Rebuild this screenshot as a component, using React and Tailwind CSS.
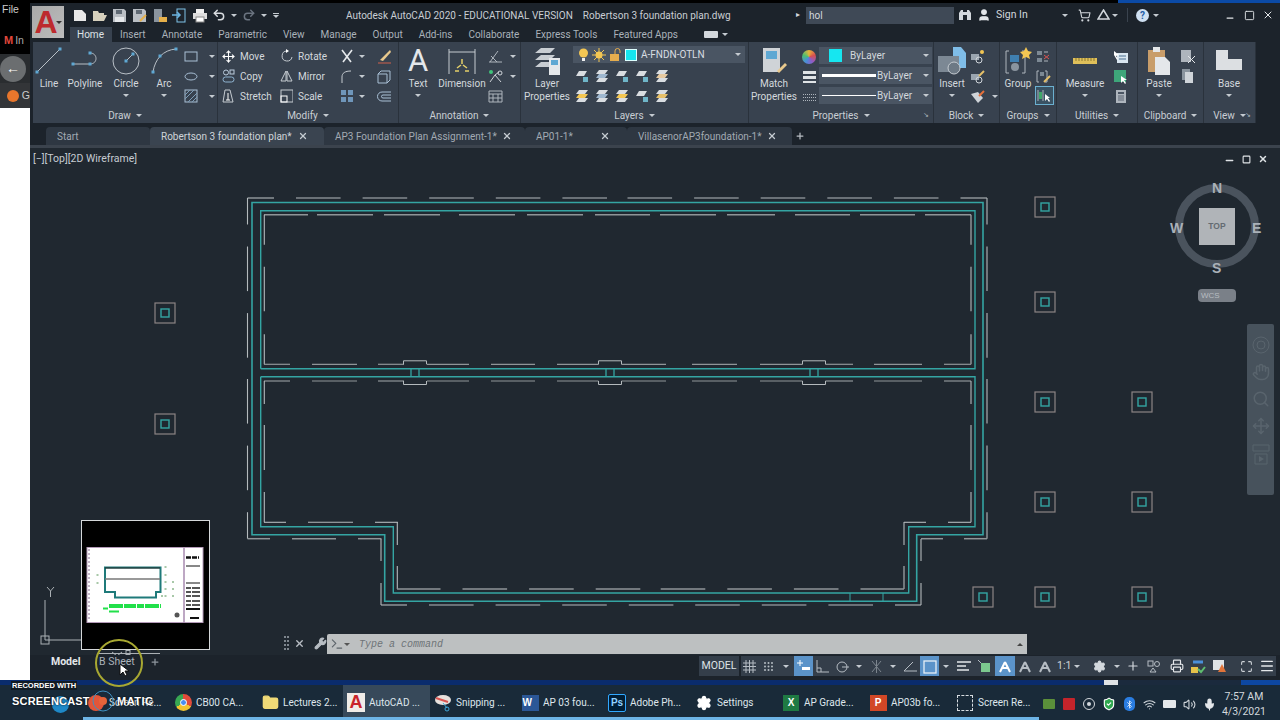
import React from "react";
import { Move, X, Plus, Wrench, ShoppingCart, User, Minus, Square, Settings, Mic, Volume2, Wifi, Bluetooth, ShieldCheck, Printer, Menu, Maximize, Terminal, Undo2, Redo2, Folder, Hand, Search } from "lucide-react";

const Caret = ({ c = "border-t-[#c5cbd1]" }) => (
  <span className={`inline-block w-0 h-0 border-x-[3px] border-x-transparent border-t-[3px] ${c}`} />
);
const S = ({ w = 16, h = 16, children, className = "" }) => (
  <svg width={w} height={h} viewBox={`0 0 ${w} ${h}`} className={`shrink-0 ${className}`} fill="none">{children}</svg>
);
const Node = ({ x, y }) => <rect x={x - 1.5} y={y - 1.5} width="3" height="3" fill="#5fa8d3" />;

const Big = ({ w, label, icon, caret, className = "" }) => (
  <div className={`flex flex-col items-center shrink-0 pt-[4px] ${className}`} style={{ width: w }}>
    <div className="h-[29px] flex items-center justify-center">{icon}</div>
    <div className="mt-[2px] text-center leading-[13px]">{label}</div>
    {caret && <div className="leading-[6px] mt-[1px]"><Caret /></div>}
  </div>
);
const Foot = ({ label, corner }) => (
  <div className="h-[16px] pt-[1px] flex items-center justify-center gap-[5px] relative text-[#c9ced4]">
    {label}<Caret />
    {corner && <span className="absolute right-[4px] text-[7px] text-[#aeb5bd]">↘</span>}
  </div>
);
const Panel = ({ w, label, corner, children }) => (
  <div className="bg-[#38424f] border-r border-[#2a323c] flex flex-col shrink-0" style={{ width: w }}>
    <div className="h-[65px] flex overflow-hidden">{children}</div>
    <Foot label={label} corner={corner} />
  </div>
);
const Row = ({ icon, text, caret, className = "" }) => (
  <div className={`h-[20px] flex items-center gap-[3px] ${className}`}>
    {icon}{text && <span>{text}</span>}{caret && <span className="ml-[4px] flex"><Caret /></span>}
  </div>
);
const Drop = ({ w, children }) => (
  <div className="h-[17px] bg-[#4a5563] flex items-center justify-between pr-[3px] mb-[3px]" style={{ width: w }}>
    <div className="flex items-center flex-1">{children}</div><Caret />
  </div>
);

const layerShape = (a = "#d9dde1") => (
  <S w={16} h={16}>
    <path d="M5 3h8l-3 5H2z" fill={a} />
    <path d="M9 9h5v5H9z" fill="#6fb6c9" />
  </S>
);
const stack = (b = "#9fb8d0") => (
  <S w={16} h={16}>
    <path d="M5 2h9l-3 4H2z" fill="#d9dde1" /><path d="M5 6h9l-3 4H2z" fill={b} /><path d="M5 10h9l-3 4H2z" fill="#d9dde1" />
  </S>
);

function Ribbon() {
  return (
    <div className="flex h-[81px] pl-[3px] text-[10px] text-[#d3d8dd]">
      <Panel w={185} label="Draw">
        <Big w={32} label="Line" icon={<S w={28} h={27}><path d="M2 25L25 2" stroke="#b9c0c7" /><Node x={2} y={25} /><Node x={25} y={2} /></S>} />
        <Big w={40} label="Polyline" icon={<S w={30} h={26}><path d="M3 16h17c8 0 8-11 0-11" stroke="#b9c0c7" /><Node x={3} y={16} /><Node x={20} y={16} /><Node x={20} y={5} /></S>} />
        <Big w={42} label="Circle" caret icon={<S w={29} h={28}><circle cx="14" cy="14" r="13" stroke="#b9c0c7" /><path d="M14 14l7-7" stroke="#b9c0c7" /><Node x={14} y={14} /><Node x={21} y={7} /></S>} />
        <Big w={34} label="Arc" caret icon={<S w={27} h={27}><path d="M2 25C4 12 12 3 25 2" stroke="#b9c0c7" /><Node x={2} y={25} /><Node x={9} y={9} /><Node x={25} y={2} /></S>} />
        <div className="pt-[4px] pl-[3px]">
          <Row caret icon={<S w={15} h={13} className="mr-[3px]"><rect x="1" y="2" width="12" height="9" stroke="#a9c0d6" /></S>} />
          <Row caret icon={<S w={15} h={13} className="mr-[3px]"><ellipse cx="7" cy="6.5" rx="6" ry="3.5" stroke="#a9c0d6" /></S>} />
          <Row caret icon={<S w={15} h={14} className="mr-[3px]"><rect x="1" y="1" width="12" height="12" stroke="#a9c0d6" /><path d="M1 10l9-9M4 13l9-9M1 6l5-5M8 13l5-5" stroke="#7d9db8" /></S>} />
        </div>
      </Panel>
      <Panel w={181} label="Modify">
        <div className="pt-[4px] pl-[4px] w-[61px]">
          <Row text="Move" className="gap-[5px]" icon={<Move size={13} className="text-white" />} />
          <Row text="Copy" className="gap-[5px]" icon={<S w={13} h={14}><circle cx="4" cy="3.5" r="2.5" stroke="#bcd" /><rect x="8" y="1" width="4" height="4" stroke="#bcd" /><rect x="1" y="8" width="11" height="5" rx="2.5" stroke="#8fb3d0" /></S>} />
          <Row text="Stretch" className="gap-[5px]" icon={<S w={13} h={14}><path d="M3 1h5l3 12H1z" stroke="#c5cbd1" /><path d="M6 4v7M4 11h4" stroke="#fff" /></S>} />
        </div>
        <div className="pt-[4px] pl-[1px] w-[61px]">
          <Row text="Rotate" className="gap-[5px]" icon={<S w={13} h={14}><path d="M7 2a5 5 0 1 0 5 6" stroke="#c5cbd1" /><path d="M6 0l3 2-3 2z" fill="#fff" /></S>} />
          <Row text="Mirror" className="gap-[5px]" icon={<S w={13} h={14}><path d="M6 2L1 12h5zM7 2l5 10H7z" stroke="#c5cbd1" /></S>} />
          <Row text="Scale" className="gap-[5px]" icon={<S w={13} h={14}><rect x="1" y="1" width="12" height="12" stroke="#c5cbd1" /><rect x="1" y="7" width="6" height="6" stroke="#fff" /></S>} />
        </div>
        <div className="pt-[4px]">
          <div className="flex h-[20px] items-center">
            <S w={14} h={15}><path d="M2 1l9 12M12 1L3 13" stroke="#e6e9ec" strokeWidth="1.6" /></S><span className="ml-[5px] mr-[12px] flex"><Caret /></span>
            <S w={15} h={15}><path d="M3 11L13 1l1 2-8 9z" fill="#e9c98d" /><path d="M1 14h13" stroke="#d0604c" /></S>
          </div>
          <div className="flex h-[20px] items-center">
            <S w={14} h={15}><path d="M2 14V8c0-4 3-6 9-6" stroke="#c5cbd1" /></S><span className="ml-[5px] mr-[12px] flex"><Caret /></span>
            <S w={15} h={15}><path d="M1 5h9v9H1zM1 5l3-3h9v9l-3 3" stroke="#a9c0d6" /></S>
          </div>
          <div className="flex h-[20px] items-center">
            <S w={14} h={14}><path d="M1 1h5v5H1zM8 1h5v5H8zM1 8h5v5H1zM8 8h5v5H8z" fill="#6f96ba" /></S><span className="ml-[5px] mr-[12px] flex"><Caret /></span>
            <S w={15} h={13}><path d="M14 2H5a4 4 0 0 0 0 9h9M14 5H6a1.500 1.500 0 0 0 0 3h8" stroke="#a9c0d6" /></S>
          </div>
        </div>
      </Panel>
      <Panel w={122} label="Annotation">
        <Big w={38} label="Text" caret icon={<span className="text-[31px] leading-[29px] text-[#e4e7ea]">A</span>} />
        <Big w={50} label="Dimension" icon={<S w={28} h={28}><path d="M1 2v25M27 2v25" stroke="#c5cbd1" /><path d="M1 5h26" stroke="#c5cbd1" /><path d="M9 21l4-3M19 21l-4-3M14 17v-5M7 24h4M17 24h4" stroke="#e3cf6a" strokeWidth="1.5" /></S>} />
        <div className="pt-[4px] pl-[1px]">
          <Row caret icon={<S w={15} h={15}><path d="M1 13h13M2 13l8-11" stroke="#aeb5bd" /><path d="M3 7l6 6" stroke="#aeb5bd" /></S>} />
          <Row caret icon={<S w={15} h={15}><path d="M2 13l5-7 6 7M7 6l4-3" stroke="#cfd4d9" /><circle cx="3" cy="3" r="2" fill="#3fc37a" /><circle cx="12" cy="4" r="2" stroke="#cfd4d9" /></S>} />
          <Row icon={<S w={15} h={13}><path d="M1 1h13v11H1zM1 4h13M1 8h13M5 4v8M10 4v8" stroke="#aeb5bd" /></S>} />
        </div>
      </Panel>
      <Panel w={228} label="Layers">
        <Big w={52} label={<>Layer<br />Properties</>} icon={<S w={30} h={30}><path d="M9 2h14l-5 5H3zM9 9h14l-5 5H3zM9 16h14l-5 5H3z" fill="#c9ced3" /><rect x="17" y="12" width="11" height="17" fill="#e4e7ea" /><rect x="19" y="14" width="7" height="5" fill="#5fa8d3" /></S>} />
        <div className="pt-[4px]">
          <div className="w-[172px] h-[17px] bg-[#4a5563] flex items-center pl-[5px] pr-[4px] gap-[3px] mb-[3px]">
            <S w={11} h={14}><circle cx="5.500" cy="5" r="4.500" fill="#f3c653" /><rect x="4" y="10" width="3" height="3" fill="#eee" /></S>
            <S w={14} h={14}><circle cx="7" cy="7" r="3.500" fill="#f3c653" /><path d="M7 0v14M0 7h14M2 2l10 10M12 2L2 12" stroke="#f3c653" /></S>
            <S w={13} h={13}><rect x="1" y="6" width="9" height="7" fill="#e6ad4e" /><path d="M6 6V3a2.500 2.500 0 0 1 5 0v2" stroke="#e6ad4e" /></S>
            <span className="w-[12px] h-[12px] bg-[#16e6f0] border border-[#dff]" />
            <span className="flex-1 ml-[1px] text-[#d8dde2]">A-FNDN-OTLN</span>
            <Caret />
          </div>
          <div className="flex gap-[4px] pl-[1px] h-[20px] items-center">{[layerShape(), stack(), layerShape(), layerShape(), stack("#e6c9a0")].map((x, i) => <span key={i}>{x}</span>)}</div>
          <div className="flex gap-[4px] pl-[1px] h-[20px] items-center">{[stack("#f3c653"), stack(), stack("#f3c653"), layerShape(), stack("#e6c06a")].map((x, i) => <span key={i}>{x}</span>)}</div>
        </div>
      </Panel>
      <Panel w={185} label="Properties" corner>
        <Big w={50} label={<>Match<br />Properties</>} icon={<S w={28} h={28}><rect x="3" y="1" width="17" height="24" fill="#cfd3d7" /><rect x="6" y="4" width="11" height="8" fill="#5fa8d3" /><path d="M17 24l8-8 2 2-8 8z" fill="#e9c98d" /></S>} />
        <div className="pt-[5px] flex">
          <div className="w-[20px] flex flex-col items-center">
            <div className="h-[20px] flex items-center"><span className="block w-[14px] h-[14px] rounded-full bg-[conic-gradient(#e8b23a,#d94f4f,#8d5cc7,#4a8fd9,#4fbf6f,#e8b23a)]" /></div>
            <div className="h-[20px] flex flex-col justify-center gap-[2px]"><span className="block w-[13px] h-[3px] bg-[#dfe3e6]" /><span className="block w-[13px] h-[3px] bg-[#dfe3e6]" /><span className="block w-[13px] h-[2px] bg-[#dfe3e6]" /></div>
            <div className="h-[20px] flex flex-col justify-center gap-[2px]"><span className="block w-[13px] h-[1px] border-t border-dotted border-[#aeb5bd]" /><span className="block w-[13px] h-[1px] border-t border-dotted border-[#aeb5bd]" /><span className="block w-[13px] h-[1px] border-t border-dotted border-[#aeb5bd]" /></div>
          </div>
          <div>
            <Drop w={113}><span className="w-[13px] h-[13px] bg-[#16e6f0] ml-[10px] mr-[8px]" />ByLayer</Drop>
            <Drop w={113}><span className="w-[54px] h-[3px] bg-white ml-[3px] mr-[1px]" />ByLayer</Drop>
            <Drop w={113}><span className="w-[54px] h-[1px] bg-white ml-[3px] mr-[1px]" />ByLayer</Drop>
          </div>
        </div>
      </Panel>
      <Panel w={66} label="Block">
        <Big w={36} label="Insert" caret icon={<S w={30} h={30}><path d="M16 1h8l5 6v15H16z" fill="#7fbde8" /><rect x="1" y="10" width="21" height="16" fill="#7c8894" /><circle cx="17" cy="22" r="6" fill="#6d7985" stroke="#c5cbd1" /></S>} />
        <div className="pt-[4px]">
          <Row icon={<S w={15} h={15}><rect x="1" y="5" width="8" height="6" fill="#9aa5b0" /><circle cx="9" cy="11" r="3" stroke="#cfd4d9" /><circle cx="12" cy="3" r="2" fill="#f3c653" /></S>} />
          <Row icon={<S w={15} h={15}><rect x="1" y="5" width="8" height="6" fill="#9aa5b0" /><circle cx="9" cy="11" r="3" stroke="#cfd4d9" /><path d="M9 7l5-5" stroke="#e6c06a" strokeWidth="2" /></S>} />
          <Row caret icon={<S w={15} h={15}><path d="M1 5l7-2 5 6-5 5z" fill="#cfd4d9" /><path d="M9 7l5-5" stroke="#e6703a" strokeWidth="2" /></S>} />
        </div>
      </Panel>
      <Panel w={57} label="Groups">
        <Big w={36} label="Group" icon={<S w={28} h={28}><path d="M5 4H2v22h3M18 4h3v22h-3" stroke="#aeb5bd" /><rect x="6" y="8" width="9" height="7" fill="#3f7fb0" /><circle cx="11" cy="20" r="4" fill="#8a949e" /><path d="M22 0l2 4 4 1-3 3 1 4-4-2-4 2 1-4-3-3 4-1z" fill="#f3c653" /></S>} />
        <div className="pt-[4px]">
          <Row icon={<S w={15} h={15}><rect x="1" y="2" width="5" height="4" fill="#7d8994" /><rect x="1" y="9" width="5" height="4" fill="#7d8994" /><path d="M8 3h4M8 12h4" stroke="#aeb5bd" /><path d="M8 6l5 4M13 6l-5 4" stroke="#d9534f" /></S>} />
          <Row icon={<S w={15} h={15}><path d="M3 2H1v11h2M9 2h2v11H9" stroke="#aeb5bd" /><rect x="4" y="3" width="4" height="4" fill="#7d8994" /><path d="M8 13l6-6" stroke="#e6c06a" strokeWidth="2" /></S>} />
          <div className="w-[19px] h-[19px] border border-[#6bb0d0] bg-[#3a5263] -ml-[1px] flex items-center justify-center"><S w={15} h={15}><path d="M1 2v11M6 2v11" stroke="#aeb5bd" /><rect x="2" y="4" width="3" height="7" fill="#3fa76a" /><path d="M8 6v7l2-2 2 3 1-1-2-3h2z" fill="#fff" /></S></div>
        </div>
      </Panel>
      <Panel w={81} label="Utilities">
        <Big w={56} label="Measure" caret icon={<S w={26} h={10}><rect x="1" y="2" width="24" height="6" fill="#e0c05a" /><path d="M4 2v3M7 2v3M10 2v3M13 2v3M16 2v3M19 2v3M22 2v3" stroke="#8d7a2e" /></S>} />
        <div className="pt-[4px]">
          <Row icon={<S w={16} h={15}><rect x="4" y="4" width="11" height="10" fill="#d9e6f0" /><path d="M6 7h7M6 10h7" stroke="#4a6f8f" /><path d="M1 2l5 4-3 1 2 3-1 1-3-5z" fill="#fff" /></S>} />
          <Row icon={<S w={16} h={15}><rect x="1" y="1" width="12" height="12" fill="#3ea67a" /><path d="M8 7v7l2-2 2 3 1-1-2-3h3z" fill="#fff" /></S>} />
          <Row icon={<S w={15} h={15}><rect x="3" y="1" width="10" height="13" fill="#aeb5bd" /><rect x="5" y="3" width="6" height="2" fill="#4a5563" /><path d="M5 7h6M5 9h6M5 11h6" stroke="#5a6572" /></S>} />
        </div>
      </Panel>
      <Panel w={66} label="Clipboard">
        <Big w={42} label="Paste" caret icon={<S w={24} h={30}><rect x="1" y="4" width="17" height="22" fill="#c89d6a" /><rect x="6" y="1" width="7" height="5" fill="#e4e7ea" /><path d="M8 11h10l5 5v13H8z" fill="#e4e7ea" /></S>} />
        <div className="pt-[4px]">
          <Row icon={<S w={16} h={15}><rect x="1" y="1" width="10" height="12" fill="#aeb5bd" /><path d="M8 7l7 7M15 7l-7 7" stroke="#e4e7ea" /></S>} />
          <Row icon={<S w={16} h={15}><rect x="2" y="0" width="8" height="11" fill="#8a949e" /><rect x="5" y="3" width="8" height="11" fill="#cfd4d9" /></S>} />
        </div>
      </Panel>
      <Panel w={52} label="View" corner>
        <Big w={50} label="Base" caret icon={<S w={28} h={21}><path d="M1 0h12v9h14v11H1z" fill="#dcdfe2" /></S>} />
      </Panel>
    </div>
  );
}

const tabs = ["Insert", "Annotate", "Parametric", "View", "Manage", "Output", "Add-ins", "Collaborate", "Express Tools", "Featured Apps"];

function TitleRow() {
  return (
    <div className="h-[24px] flex items-center text-[10px] text-[#d3d8dd] relative">
      <div className="ml-[42px] flex items-center gap-[4px] w-[250px]">
        <S w={15} h={15}><path d="M2 2h8l4 4v7H2z" fill="#e8e8e8" /></S>
        <span className="ml-[1px]"><S w={15} h={15}><path d="M1 13V3h5l1 2h5v2H5l-2 6zM4 7h11l-3 6H2z" fill="#d6d0bd" /></S></span>
        <span className="ml-[1px]"><S w={15} h={15}><path d="M1 1h11l2 2v11H1z" fill="#b9bec4" /><rect x="4" y="2" width="6" height="4" fill="#5f6974" /><rect x="3" y="9" width="9" height="5" fill="#e4e7ea" /></S></span>
        <span className="ml-[1px]"><S w={15} h={15}><path d="M1 1h11l2 2v11H1z" fill="#b9bec4" /><rect x="4" y="2" width="6" height="4" fill="#5f6974" /><path d="M8 13l6-6" stroke="#e6b04a" strokeWidth="2" /></S></span>
        <span className="ml-[1px]"><S w={15} h={15}><rect x="2" y="1" width="8" height="13" fill="#8a949e" /><path d="M7 9h8v5H7z" fill="#e6b04a" /></S></span>
        <span className="ml-[1px]"><S w={15} h={15}><rect x="5" y="1" width="8" height="13" stroke="#7fc4ea" /><path d="M0 7h8M5 4l3 3-3 3" stroke="#6ab3e0" strokeWidth="1.500" /></S></span>
        <span className="ml-[1px]"><S w={16} h={15}><rect x="4" y="1" width="8" height="4" fill="#eee" /><rect x="1" y="5" width="14" height="6" fill="#ddd" /><rect x="4" y="9" width="8" height="5" fill="#fff" stroke="#888" /></S></span>
        <Undo2 size={14} className="text-[#d9dde1]" strokeWidth={2.5} /><span className="ml-[1px] flex"><Caret /></span>
        <Redo2 size={14} className="text-[#6b7480] ml-[1px]" strokeWidth={2.5} /><span className="ml-[1px] flex"><Caret /></span>
        <span className="flex flex-col items-center gap-[1px] ml-[2px]"><span className="block w-[6px] h-[1px] bg-[#c5cbd1]" /><Caret /></span>
      </div>
      <div className="ml-[24px] w-[425px] flex text-[#c9ced4] whitespace-nowrap">
        <span>Autodesk AutoCAD 2020 - EDUCATIONAL VERSION</span><span className="ml-[10px]">Robertson 3 foundation plan.dwg</span>
      </div>
      <span className="ml-[25px] text-[8px] text-[#d3d8dd]">▸</span>
      <div className="ml-[6px] w-[148px] h-[17px] bg-[#3f4956] pl-[3px] leading-[17px]">hol</div>
      <S w={14} h={14} className="ml-[4px]"><path d="M1 12V5l2-3h2v10zM13 12V5l-2-3H9v10z" fill="#d3d8dd" /><rect x="5" y="4" width="4" height="3" fill="#d3d8dd" /></S>
      <User size={14} className="ml-[5px] text-[#e4e7ea] fill-[#e4e7ea]" />
      <span className="ml-[5px] w-[66px] text-[10.5px]">Sign In</span>
      <Caret />
      <ShoppingCart size={13} className="ml-[10px] text-[#d3d8dd]" />
      <S w={13} h={12} className="ml-[6px]"><path d="M6.500 1L12 10H1z" stroke="#d3d8dd" strokeWidth="1.500" /></S>
      <span className="ml-[2px] flex"><Caret /></span>
      <span className="ml-[9px] w-px h-[14px] bg-[#3a434e]" />
      <span className="ml-[8px] w-[13px] h-[13px] rounded-full bg-[#cfe0f2] text-[#1f5ea8] text-[10px] font-bold flex items-center justify-center">?</span>
      <span className="ml-[4px] flex"><Caret /></span>
      <Minus size={10} className="ml-[66px] mt-[6px] text-[#e4e7ea]" strokeWidth={3} />
      <Square size={11} className="ml-[9px] text-[#e4e7ea]" />
      <X size={12} className="ml-[7px] text-[#e4e7ea]" />
    </div>
  );
}

function TabRow() {
  return (
    <div className="h-[15px] flex items-center text-[10px] text-[#aab2ba]">
      <div className="ml-[40px] w-[42px] h-[15px] bg-[#38424f] flex items-center justify-center text-[#dfe3e6] pr-[1px]">Home</div>
      <div className="flex ml-[8px] gap-[16px] whitespace-nowrap">{tabs.map((t) => <span key={t}>{t}</span>)}</div>
      <span className="ml-[26px] w-[14px] h-[7px] bg-[#d3d8dd] rounded-[1px]" />
      <span className="ml-[4px] flex"><Caret /></span>
    </div>
  );
}

const FileTab = ({ w, active, text, close = true, cx }) => (
  <div className={`h-[18px] rounded-t-[4px] flex items-center shrink-0 ${active ? "bg-[#3a4450] text-[#cfd4d9]" : "bg-[#2e3742] text-[#a2aab3]"}`} style={{ width: w }}>
    <span className="ml-[11px] whitespace-nowrap">{text}</span>
    {close && <X size={10} strokeWidth={3} className="text-[#c5cbd1] shrink-0" style={{ marginLeft: cx }} />}
  </div>
);

const seq = (a, b, first, dash = 44.6, gap = 22) => {
  const mid = (a + b) / 2;
  const out = [];
  let p = 0, len = first;
  while (p < mid - a) { out.push([a + p, a + p + len]); p += len + gap; len = dash; }
  const half = out.length;
  for (let i = 0; i < half; i++) { const [s, e] = out[i]; if (e <= mid + 8) out.push([a + b - e, a + b - s]); }
  return out;
};
const G1 = "#b4babd", G2 = "#8f9598", T = "#34a5a3";
const HL = ({ y, s, c = G1, w = 1.1 }) => s.map(([a, b], i) => <line key={i} x1={a} x2={b} y1={y} y2={y} stroke={c} strokeWidth={w} />);
const VL = ({ x, s, c = G1, w = 1.1 }) => s.map(([a, b], i) => <line key={i} x1={x} x2={x} y1={a} y2={b} stroke={c} strokeWidth={w} />);
const cols = [[1045, 207], [1045, 302], [1045, 402], [1142, 402], [1045, 502], [1142, 502], [983, 597], [1045, 597], [1142, 597], [165, 313], [165, 424]];
const bump = (x, y, d) => <path d={`M${x - 11.500} ${y}v${d}h23v${-d}`} stroke={G1} strokeWidth="1" />;

function Plan() {
  const innerTop = [[264, 308], [317, 373], [384, 440], [459, 515], [527, 583], [595, 650], [660, 716], [727, 775], [795, 850], [860, 915], [925, 971]];
  const mid = [[264, 290], [312, 357], [378, 404], [427, 469], [491, 535], [557, 598.500], [621.500, 666], [692, 737], [760, 802.500], [825.500, 853], [874, 922], [944, 971]];
  return (
    <svg className="absolute inset-0" width="1250" height="507" viewBox="30 148 1250 507" fill="none">
      <path d="M252 368V202.500H983V534.700H916.700V601.300H384.700V534.700H252V368" stroke={T} strokeWidth="1.600" />
      <path d="M260.700 368.700V210.700H975V368.700H260.700M260.700 376.700H975V526.700H908.700V593H393.300V526.700H260.700V376.700" stroke={T} strokeWidth="1.400" />
      {[415, 610, 814].map((x) => <g key={x} stroke={T} strokeWidth="1.300"><path d={`M${x - 4} 369v8M${x + 4} 369v8`} /></g>)}
      <path d="M850 593v8M883 593v8" stroke={T} strokeWidth="1" />
      <HL y={198} s={seq(247.500, 987, 26.500)} />
      <VL x={247.500} s={seq(198, 538.700, 26.500)} />
      <VL x={987} s={seq(198, 538.700, 26.500)} />
      <HL y={214.700} s={innerTop} c={G2} w={1.500} />
      <VL x={264.300} s={seq(214.700, 364.300, 30)} />
      <VL x={971} s={seq(214.700, 364.300, 30)} />
      <HL y={364.300} s={mid} c={G2} w={1.200} />
      <HL y={381} s={mid} c={G2} w={1.200} />
      {[415, 610, 814].map((x) => <g key={x}>{bump(x, 364.300, -3.500)}{bump(x, 381, 3.500)}</g>)}
      <VL x={264.300} s={[[381, 404], [425, 470], [492, 522.300]]} />
      <VL x={971} s={[[381, 404], [425, 470], [492, 522.300]]} />
      <HL y={522.300} s={[[264, 286], [308, 353], [375, 397.800], [904, 926], [948, 971]]} />
      <VL x={397.300} s={[[522, 545], [566, 589]]} />
      <VL x={904} s={[[522, 545], [566, 589]]} />
      <HL y={538.700} s={[[247.500, 270], [292, 336], [358, 381.500], [921, 943], [964, 987]]} c={G2} w={1.500} />
      <VL x={381} s={[[539, 561], [583, 605]]} />
      <VL x={921} s={[[539, 561], [583, 605]]} />
      <HL y={589} s={seq(397, 904, 43.500)} c={G2} w={1.300} />
      <HL y={605} s={seq(381, 921, 26)} />
      {cols.map(([x, y], i) => <g key={i}><rect x={x - 10} y={y - 10} width="20" height="20" stroke="#8c8484" strokeWidth="1.200" /><rect x={x - 4} y={y - 4} width="8" height="8" stroke={T} strokeWidth="1.400" /></g>)}
      <path d="M45 640V600M45 640H82" stroke="#aab0b4" />
      <rect x="41" y="636" width="8" height="8" stroke="#aab0b4" />
      <path d="M47 587l3.500 4 3.500-4M50.500 591v6" stroke="#aab0b4" />
      <path d="M97 653.500H160" stroke="#aab0b4" />
      <path d="M112 652l5 4 5-4" stroke="#aab0b4" />
      <rect x="126" y="650.500" width="4" height="4" stroke="#aab0b4" />
      <circle cx="1217" cy="226" r="38" stroke="#4a535d" strokeWidth="8" />
    </svg>
  );
}

const CubeL = ({ t, className }) => <span className={`absolute text-[14px] font-bold text-[#aab1b8] font-['Liberation_Sans'] ${className}`}>{t}</span>;

function Canvas() {
  return (
    <div className="h-[507px] relative bg-[#202830] overflow-hidden">
      <Plan />
      <div className="relative flex items-center h-[22px] pl-[3px] pr-[12px] text-[10.5px] text-[#c5cbd1]">
        <span className="flex-1">[−][Top][2D Wireframe]</span>
        <Minus size={11} strokeWidth={3} className="mt-[3px] text-[#dfe3e6]" />
        <Square size={9} strokeWidth={3} className="ml-[7px] text-[#dfe3e6]" />
        <X size={10} strokeWidth={3.500} className="ml-[7px] text-[#dfe3e6]" />
      </div>
      <div className="absolute left-[1169px] top-[60px] w-[36px] h-[37px] bg-[#b0b4b8] flex items-center justify-center text-[8.5px] font-bold text-[#646b72] font-['Liberation_Sans']">TOP</div>
      <CubeL t="N" className="left-[1182px] top-[30px]" />
      <CubeL t="S" className="left-[1182px] top-[110px]" />
      <CubeL t="W" className="left-[1140px] top-[70px]" />
      <CubeL t="E" className="left-[1222px] top-[70px]" />
      <div className="absolute left-[1168px] top-[141px] w-[38px] h-[13px] rounded-[4px] bg-[#7a8088] text-[8px] text-[#b8bdc2] flex items-center pl-[3px] font-['Liberation_Sans']">WCS</div>
      <div className="absolute left-[1217px] top-[176px] w-[27px] h-[171px] rounded-[2px] bg-[#47525c] flex flex-col items-center pt-[12px] gap-[9px] text-[#59646d]">
        <S w={18} h={18}><circle cx="9" cy="9" r="8" stroke="currentColor" /><circle cx="9" cy="9" r="4" stroke="currentColor" /></S>
        <Hand size={18} />
        <Search size={18} />
        <Move size={18} />
        <S w={18} h={22}><path d="M1 1h16v6H1zM3 10h12v10H3z" stroke="currentColor" /><path d="M7 12l5 3-5 3z" fill="currentColor" /></S>
      </div>
      <div className="absolute left-[254px] top-[488px] flex items-center gap-[5px]">
        <span className="flex gap-[1px]"><span className="w-[2px] h-[14px] border-l-2 border-dotted border-[#7e868e]" /><span className="w-[2px] h-[14px] border-l-2 border-dotted border-[#7e868e]" /></span>
        <X size={11} strokeWidth={3} className="text-[#b8bec4]" />
        <Wrench size={13} className="ml-[4px] text-[#b8bec4] fill-[#b8bec4]" />
      </div>
      <div className="absolute left-[297px] top-[486px] w-[700px] h-[20px] bg-[#bdc0c1] rounded-tl-[2px] flex items-center pl-[3px]">
        <Terminal size={14} className="text-[#5d646b]" />
        <Caret c="border-t-[#555]" />
        <span className="ml-[9px] font-['Liberation_Mono'] italic text-[10px] text-[#6e7478]">Type a command</span>
        <span className="ml-auto mr-[4px] rotate-180 flex"><Caret c="border-t-[#444]" /></span>
      </div>
    </div>
  );
}

const Sb = ({ active, w = 18, children }) => (
  <div className={`h-[20px] flex items-center justify-center shrink-0 ${active ? "bg-[#5b93c9]" : ""}`} style={{ width: w }}>{children}</div>
);
const sc = "#b5bcc3";
const dots = [2, 5.5, 9];
function StatusBar() {
  return (
    <div className="h-[22px] flex items-center relative text-[10.5px]">
      <div className="ml-[21px] mb-[8px] h-[18px] flex items-center font-bold text-[#e4e7ea] w-[48px]">Model</div>
      <div className="text-[#aab2ba] mb-[8px] w-[51px]">B Sheet</div>
      <Plus size={10} strokeWidth={3} className="text-[#8d959d] mb-[8px]" />
      <div className="ml-[539px] h-[20px] w-[40px] bg-[#343e4a] flex items-center justify-center text-[#dfe3e6]">MODEL</div>
      <div className="ml-[2px] h-[20px] w-[535px] bg-[#343e4a] flex items-center">
        <Sb w={17}><S w={13} h={13}><path d="M3 0v13M6.500 0v13M10 0v13M0 3h13M0 6.500h13M0 10h13" stroke={sc} /></S></Sb>
        <Sb w={20}><S w={11} h={11}>{dots.map((x) => dots.map((y) => <circle key={`${x}-${y}`} cx={x} cy={y} r="1" fill={sc} />))}</S></Sb>
        <Sb w={16}><Caret /></Sb>
        <Sb active w={19}><S w={15} h={14}><path d="M4 1v6M1 4h6" stroke="#fff" /><rect x="6" y="8" width="8" height="3" fill="#fff" /></S></Sb>
        <Sb w={19}><S w={14} h={14}><path d="M1 1v12h12M1 9h4v4" stroke={sc} /></S></Sb>
        <Sb w={20}><S w={13} h={13}><circle cx="6" cy="7" r="5" stroke={sc} /><path d="M6 7h7" stroke={sc} /></S></Sb>
        <Sb w={14}><Caret /></Sb>
        <Sb w={20}><S w={11} h={13}><path d="M1 1l9 11M10 1L1 12M5.500 0v13" stroke="#7c858e" /></S></Sb>
        <Sb w={14}><Caret /></Sb>
        <Sb w={20}><S w={14} h={12}><path d="M1 11h13M1 11l9-9" stroke={sc} /></S></Sb>
        <Sb active w={19}><S w={15} h={15}><rect x="2" y="2" width="12" height="12" stroke="#e6eef6" strokeWidth="1.300" /></S></Sb>
        <Sb w={14}><Caret /></Sb>
        <Sb w={21}><S w={14} h={10}><path d="M0 1h14M0 5h9M0 9h12" stroke="#e4e7ea" strokeWidth="1.500" /></S></Sb>
        <Sb w={21}><S w={13} h={13}><rect x="3" y="3" width="9" height="9" fill="#7cc98f" /><path d="M0 0l3 3" stroke={sc} /></S></Sb>
        <Sb active w={20}><S w={14} h={13}><path d="M7 2L2 12M7 2l5 10M4 8h6" stroke="#fff" strokeWidth="2" /></S></Sb>
        <Sb w={20}><S w={14} h={13}><path d="M7 2L2 12M7 2l5 10M4 8h6" stroke={sc} strokeWidth="2" /></S></Sb>
        <Sb w={20}><S w={14} h={13}><path d="M7 2L2 12M7 2l5 10M4 8h6" stroke={sc} strokeWidth="2" /></S></Sb>
        <div className="w-[16px] ml-[2px] text-[#cfd4d9] text-center">1:1</div>
        <Sb w={12}><Caret /></Sb>
        <span className="ml-[5px] w-[1px]" />
        <Sb w={22}><Settings size={13} className="text-[#d3d8dd] fill-[#d3d8dd]" /></Sb>
        <Sb w={12}><Caret /></Sb>
        <Sb w={20}><Plus size={14} className="text-[#d3d8dd]" /></Sb>
        <Sb w={22}><S w={13} h={13}><rect x="1" y="1" width="5" height="5" stroke={sc} /><circle cx="10" cy="4" r="2.500" stroke={sc} /><path d="M6 8l3 4H3z" stroke={sc} /></S></Sb>
        <span className="w-[4px]" />
        <Sb w={22}><Printer size={14} className="text-[#e4e7ea]" /></Sb>
        <Sb w={20}><S w={16} h={15}><rect x="1" y="8" width="7" height="6" fill="#e6c24a" /><path d="M3 3h10" stroke="#4a8fd9" strokeWidth="3" /><path d="M8 10l3 3 4-5" stroke="#5fbf6f" strokeWidth="2" /></S></Sb>
        <Sb w={22}><S w={15} h={14}><rect x="1" y="1" width="11" height="10" fill="#dfe3e6" /><path d="M10 5l-4 8h8z" fill="#e0743a" /></S></Sb>
        <span className="w-[9px]" />
        <Sb w={24}><Maximize size={13} className="text-[#cfd4d9]" /></Sb>
        <Sb w={18}><Menu size={16} className="text-[#e4e7ea]" /></Sb>
      </div>
    </div>
  );
}

const tb = [
  ["Screen Re...", <span className="w-[16px] h-[16px] rounded-full bg-[#e2563a]" />, "w-[87px]"],
  ["CB00 CA...", <span className="w-[17px] h-[17px] rounded-full bg-[conic-gradient(#e24b3a_0_33%,#f2c230_33%_66%,#38a853_66%)] flex items-center justify-center"><span className="w-[7px] h-[7px] rounded-full bg-[#4a8ef0] border border-white" /></span>, "w-[87px]"],
  ["Lectures 2...", <Folder size={17} className="text-[#efd977] fill-[#efd977]" />, "w-[86px]"],
  ["AutoCAD ...", <span className="w-[19px] h-[19px] bg-[#f0ece8] text-[#c9242b] text-[18px] leading-[19px] font-bold text-center font-['Liberation_Sans']">A</span>, "w-[87px] bg-[#37495a]"],
  ["Snipping ...", <S w={19} h={18}><ellipse cx="9" cy="6" rx="8" ry="5" fill="#e6e0dc" /><path d="M2 4l12 4" stroke="#d9534f" strokeWidth="2" /><circle cx="13" cy="15" r="2" stroke="#3fa6d9" /><path d="M9 9l4 5" stroke="#3fa6d9" /></S>, "w-[87px]"],
  ["AP 03 fou...", <span className="w-[17px] h-[16px] bg-[#2b5797] text-white text-[10px] font-bold leading-[16px] pl-[1px] font-['Liberation_Sans']">W</span>, "w-[87px]"],
  ["Adobe Ph...", <span className="w-[18px] h-[18px] bg-[#001e36] border border-[#31a8ff] rounded-[2px] text-[#8fd0ff] text-[10px] font-bold leading-[16px] text-center font-['Liberation_Sans']">Ps</span>, "w-[87px]"],
  ["Settings", <Settings size={16} className="text-white fill-white" />, "w-[87px]"],
  ["AP Grade...", <span className="w-[16px] h-[16px] bg-[#1f7a43] text-white text-[10px] font-bold leading-[16px] text-center font-['Liberation_Sans']">X</span>, "w-[87px]"],
  ["AP03b fo...", <span className="w-[17px] h-[16px] bg-[#d24726] text-white text-[10px] font-bold leading-[16px] text-center font-['Liberation_Sans']">P</span>, "w-[87px]"],
  ["Screen Re...", <span className="w-[16px] h-[16px] border border-dashed border-[#d8dde2]" />, "w-[87px]"],
];
const Tray = ({ children }) => <span className="w-[20px] flex justify-center shrink-0">{children}</span>;

function Taskbar() {
  return (
    <div className="h-[35px] bg-[#192a39] flex items-stretch text-[10px] text-[#dfe6ec] relative">
      <div className="w-[83px] flex items-center pl-[52px] pt-[3px]"><span className="w-[17px] h-[17px] rounded-full bg-[#1e88c7]" /></div>
      {tb.map(([t, ic, cl], i) => (
        <div key={i} className={`${cl} shrink-0 flex items-center gap-[4px] pl-[4px] pt-[3px] border-b-[3px] border-[#6db4e6] whitespace-nowrap`}>
          <span className="w-[18px] flex justify-center shrink-0">{ic}</span><span>{t}</span>
        </div>
      ))}
      <div className="flex items-center pt-[3px] text-[#d3d8dd]">
        <Tray><span className="w-[12px] h-[10px] bg-[#5b8f3a] rounded-[1px]" /></Tray>
        <Tray><span className="w-[12px] h-[12px] bg-[#c4242b] rounded-[1px]" /></Tray>
        <Tray><span className="w-[12px] h-[12px] rounded-full border border-[#d3d8dd] flex items-center justify-center"><span className="w-[4px] h-[4px] rounded-full bg-[#d3d8dd]" /></span></Tray>
        <Tray><ShieldCheck size={14} className="text-white fill-[#2fa84f]" /></Tray>
        <Tray><span className="w-[11px] h-[14px] rounded-[5px] bg-[#2a7de1] flex items-center justify-center"><Bluetooth size={9} className="text-white" /></span></Tray>
        <Tray><Wifi size={13} /></Tray>
        <Tray><span className="w-[13px] h-[8px] bg-[#e4e7ea] rounded-[1px]" /></Tray>
        <Tray><Volume2 size={13} /></Tray>
        <Tray><Mic size={13} className="text-[#e4e7ea] fill-[#e4e7ea]" /></Tray>
      </div>
      <div className="absolute right-[14px] top-0 h-full pt-[2px] flex flex-col items-center justify-center leading-[15px] text-[10.5px] text-[#d3d8dd]">
        <span>7:57 AM</span><span>4/3/2021</span>
      </div>
    </div>
  );
}

function Thumbnail() {
  return (
    <div className="absolute left-[81px] top-[520px] w-[129px] h-[130px] bg-black border border-[#d5d8da]">
      <svg width="127" height="128" viewBox="82 521 127 128" fill="none" className="block">
        <rect x="87" y="547.500" width="116" height="75" fill="#fff" stroke="#b39ab8" />
        <path d="M89 549v72" stroke="#8a6f92" strokeDasharray="2 2" />
        <path d="M184 548v75" stroke="#a88bb0" strokeWidth="1.500" />
        <path d="M105 567.500h55.500v24.500h-4.500v5.500h-41v-5.500h-10z" stroke="#1f7a7a" strokeWidth="2" fill="#fff" />
        <path d="M105 568h55" stroke="#222" strokeWidth="1" />
        <path d="M105 579h55" stroke="#777" strokeWidth="1.500" />
        <path d="M186 557.500h13" stroke="#111" strokeWidth="2.500" strokeDasharray="5 1" />
        <path d="M186 566h14" stroke="#111" />
        <path d="M186 583h14" stroke="#111" />
        <path d="M186 588h14M186 592h14M186 596h14M186 601h14M186 605h14" stroke="#555" strokeWidth="2" strokeDasharray="5 1 8 0" />
        <path d="M186 609h14" stroke="#111" strokeWidth="2" />
        <path d="M190 618h9" stroke="#111" strokeWidth="2" />
        <path d="M109 606h52" stroke="#22e04a" strokeWidth="4" strokeDasharray="14 1 12 1 7 1" />
        <path d="M103 608.500h5M109 611.500h10" stroke="#22e04a" strokeWidth="2" />
        <circle cx="177" cy="615" r="2.500" fill="#555" />
        {[[97.500, 575], [97.500, 583], [165.500, 567], [165.500, 575], [165.500, 582], [165.500, 589], [173, 582], [173, 589], [162, 596], [165.500, 596], [173, 596]].map(([x, y], i) => <rect key={i} x={x - 1} y={y - 1} width="2" height="2" fill="#a8c8a8" />)}
      </svg>
    </div>
  );
}

export default function App() {
  return (
    <div className="w-[1280px] h-[720px] relative overflow-hidden bg-black flex flex-col font-['Roboto',sans-serif]">
      <div className="h-[680px] flex">
        <div className="w-[30px] shrink-0 flex flex-col bg-white overflow-hidden text-[10.500px] text-white font-['Liberation_Sans']">
          <div className="h-[27px] bg-black pl-[2px] pt-[2px] text-[#ccc]">File</div>
          <div className="h-[27px] bg-black flex items-center pl-[4px] gap-[2px]"><span className="text-[#e0483c] font-bold text-[11px]">M</span><span className="text-[#aaa]">In</span></div>
          <div className="h-[29px] bg-[#2a2d30] flex items-center"><span className="w-[26px] h-[26px] rounded-full bg-[#6b6e70] flex items-center justify-center text-white text-[14px]">←</span></div>
          <div className="h-[25px] bg-[#333538] flex items-center pl-[7px] gap-[3px]"><span className="w-[12px] h-[12px] rounded-full bg-[#e8762c]" /><span className="text-[#ccc]">G</span></div>
        </div>
        <div className="w-[1250px] flex flex-col bg-[#1c232b]">
          <div className="h-[3px] bg-black flex justify-end"><span className="w-[162px] bg-[#0b4aa6]" /></div>
          <TitleRow />
          <TabRow />
          <Ribbon />
          <div className="h-[4px]" />
          <div className="h-[18px] flex items-end pl-[16px] text-[10px]">
            <FileTab w={104} text="Start" close={false} />
            <FileTab w={174} active text="Robertson 3 foundation plan*" cx={6} />
            <FileTab w={201} text="AP3 Foundation Plan Assignment-1*" cx={5} />
            <FileTab w={102} text="AP01-1*" cx={27} />
            <FileTab w={165} text="VillasenorAP3foundation-1*" cx={5} />
            <Plus size={10} strokeWidth={3} className="ml-[3px] mb-[4px] text-[#b8bec4]" />
          </div>
          <div className="h-[3px] bg-[#3b434d]" />
          <Canvas />
          <StatusBar />
        </div>
      </div>
      <div className="h-[5px] bg-[#0a2c6d] flex">
        <span className="ml-[1104px] w-[14px] bg-[#dfe3e6]" />
        <span className="w-[123px] bg-[#1b2a3d]" />
        <span className="flex-1 bg-[#0d47a1]" />
      </div>
      <Taskbar />
      <Thumbnail />
      <svg className="absolute left-0 top-0 pointer-events-none" width="1280" height="720" fill="none">
        <circle cx="119" cy="663" r="23" stroke="#a8a832" strokeWidth="2" />
        <path d="M120 664v11l3-3 2 4 2-1-2-4h4z" fill="#fff" stroke="#111" />
        <circle cx="103" cy="701" r="10" stroke="#3f8fc0" />
        <circle cx="103" cy="701" r="4" fill="#e5643a" />
      </svg>
      <div className="absolute left-[11px] top-[681px] text-[7.500px] font-bold text-white font-['Liberation_Sans'] bg-[#111b24] px-[1px] leading-[9px]">RECORDED WITH</div>
      <div className="absolute left-[12px] top-[694px] text-[11px] tracking-[0.2px] font-bold text-white font-['Liberation_Sans'] leading-[14px] [text-shadow:0_0_2px_#000]">SCREENCAST</div>
      <div className="absolute left-[117px] top-[694px] text-[11px] tracking-[0.5px] font-bold text-white font-['Liberation_Sans'] leading-[14px] [text-shadow:0_0_2px_#000]">MATIC</div>
      <div className="absolute left-[32px] top-[6px] w-[32px] h-[32px] bg-gradient-to-br from-[#a8a8a8] to-[#bdbdbd] flex items-center justify-center">
        <span className="text-[#bd2a2e] text-[32px] leading-[32px] font-bold font-['Liberation_Sans'] -ml-[4px]">A</span>
        <span className="absolute right-[2px] top-[15px] flex"><Caret c="border-t-[#333]" /></span>
      </div>
    </div>
  );
}
